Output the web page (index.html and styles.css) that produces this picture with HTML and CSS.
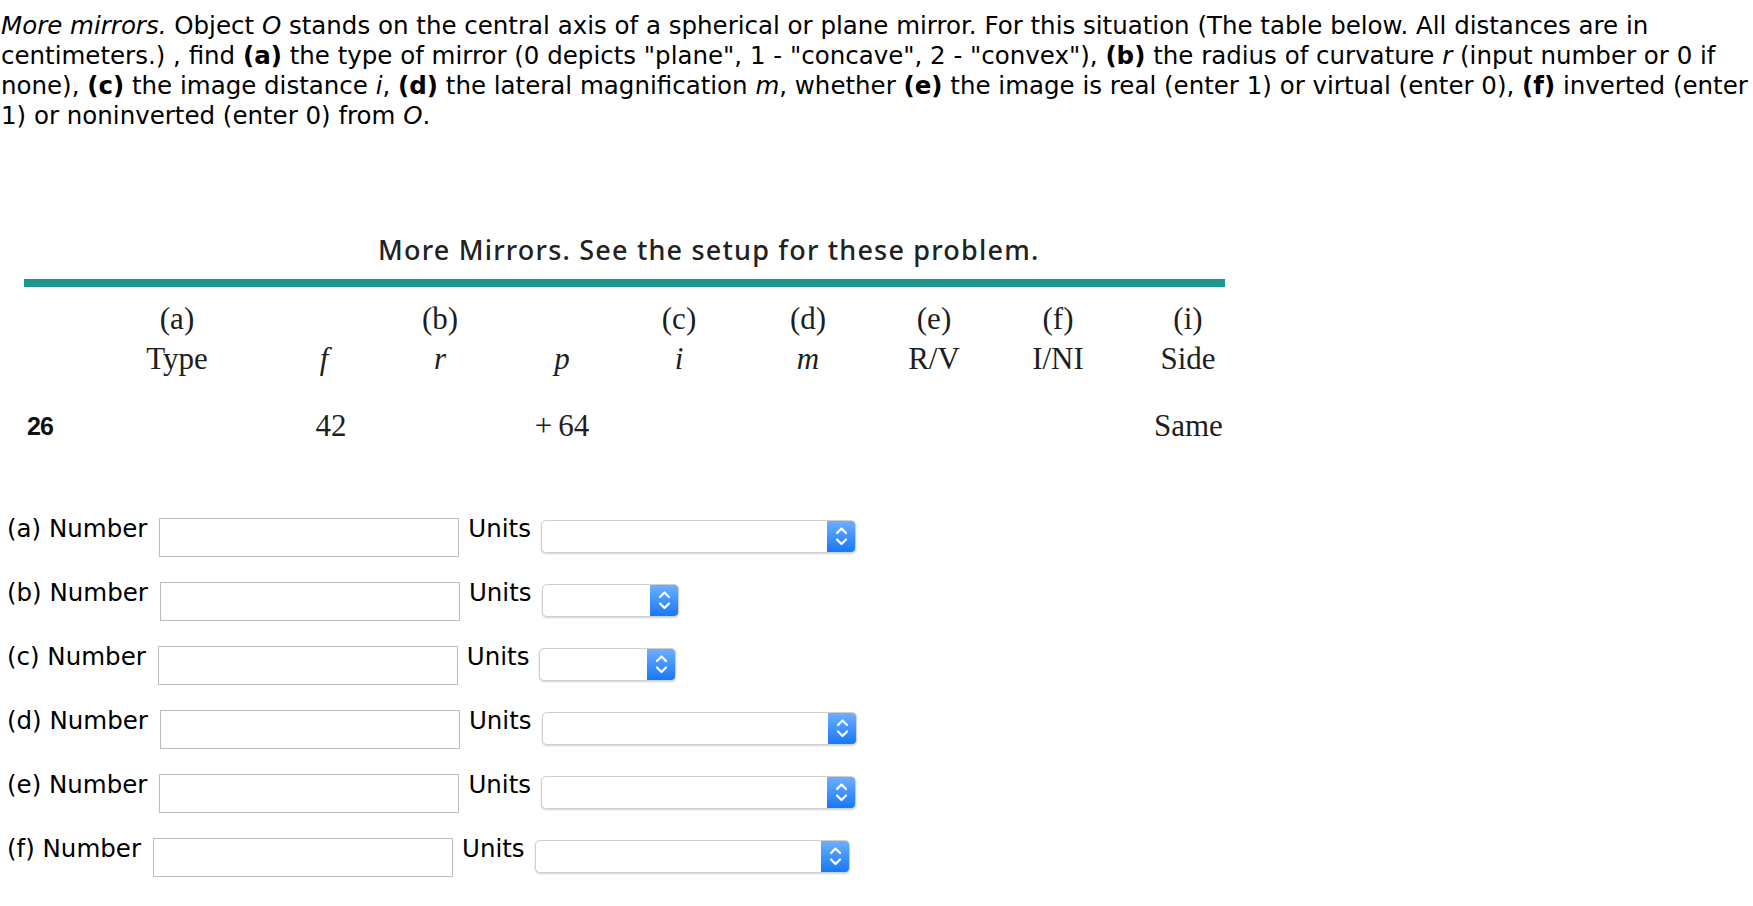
FILE: index.html
```html
<!DOCTYPE html>
<html lang="en">
<head>
    <meta charset="UTF-8">
    <title>More mirrors</title>
    <link rel="stylesheet" href="styles.css">
</head>
<body>
    <p class="prompt"><i>More mirrors.</i> Object <i>O</i> stands on the central axis of a spherical or plane mirror. For this situation (The table below. All distances are in centimeters.) , find <b>(a)</b> the type of mirror (0 depicts "plane", 1 - "concave", 2 - "convex"), <b>(b)</b> the radius of curvature <i>r</i> (input number or 0 if none), <b>(c)</b> the image distance <i>i</i>, <b>(d)</b> the lateral magnification <i>m</i>, whether <b>(e)</b> the image is real (enter 1) or virtual (enter 0), <b>(f)</b> inverted (enter 1) or noninverted (enter 0) from <i>O</i>.</p>

    <!-- tabla del libro -->
    <div class="figure">
        <div class="fig-title">More Mirrors. See the setup for these problem.</div>
        <div class="fig-bar"></div>
        <div class="fig-table">
            <div></div>
            <div>(a)</div>
            <div></div>
            <div>(b)</div>
            <div></div>
            <div>(c)</div>
            <div>(d)</div>
            <div>(e)</div>
            <div>(f)</div>
            <div>(i)</div>

            <div></div>
            <div>Type</div>
            <div><i>f</i></div>
            <div><i>r</i></div>
            <div><i>p</i></div>
            <div><i>i</i></div>
            <div><i>m</i></div>
            <div>R/V</div>
            <div>I/NI</div>
            <div>Side</div>

            <div class="row-num">26</div>
            <div></div>
            <div class="shift">42</div>
            <div></div>
            <div>+&thinsp;64</div>
            <div></div>
            <div></div>
            <div></div>
            <div></div>
            <div>Same</div>
        </div>
    </div>

    <!-- respuestas -->
    <div class="answers">
        <div class="answer">
            <span class="label">(a) Number</span>
            <input type="text" class="num">
            <span class="units">Units</span>
            <div class="select wide"><span class="select-value"></span><span class="select-btn"><svg width="29" height="33" viewBox="0 0 29 33"><path d="M10 13 L14.5 8.5 L19 13 M10 19.5 L14.5 24 L19 19.5"/></svg></span></div>
        </div>
        <div class="answer">
            <span class="label">(b) Number</span>
            <input type="text" class="num">
            <span class="units">Units</span>
            <div class="select"><span class="select-value"></span><span class="select-btn"><svg width="29" height="33" viewBox="0 0 29 33"><path d="M10 13 L14.5 8.5 L19 13 M10 19.5 L14.5 24 L19 19.5"/></svg></span></div>
        </div>
        <div class="answer">
            <span class="label">(c) Number</span>
            <input type="text" class="num">
            <span class="units">Units</span>
            <div class="select"><span class="select-value"></span><span class="select-btn"><svg width="29" height="33" viewBox="0 0 29 33"><path d="M10 13 L14.5 8.5 L19 13 M10 19.5 L14.5 24 L19 19.5"/></svg></span></div>
        </div>
        <div class="answer">
            <span class="label">(d) Number</span>
            <input type="text" class="num">
            <span class="units">Units</span>
            <div class="select wide"><span class="select-value"></span><span class="select-btn"><svg width="29" height="33" viewBox="0 0 29 33"><path d="M10 13 L14.5 8.5 L19 13 M10 19.5 L14.5 24 L19 19.5"/></svg></span></div>
        </div>
        <div class="answer">
            <span class="label">(e) Number</span>
            <input type="text" class="num">
            <span class="units">Units</span>
            <div class="select wide"><span class="select-value"></span><span class="select-btn"><svg width="29" height="33" viewBox="0 0 29 33"><path d="M10 13 L14.5 8.5 L19 13 M10 19.5 L14.5 24 L19 19.5"/></svg></span></div>
        </div>
        <div class="answer">
            <span class="label">(f) Number</span>
            <input type="text" class="num">
            <span class="units">Units</span>
            <div class="select wide"><span class="select-value"></span><span class="select-btn"><svg width="29" height="33" viewBox="0 0 29 33"><path d="M10 13 L14.5 8.5 L19 13 M10 19.5 L14.5 24 L19 19.5"/></svg></span></div>
        </div>
    </div>
</body>
</html>
```

FILE: styles.css
```css
body {
    margin: 0;
    background-color: #fff;
    color: #000;
    font-family: 'DejaVu Sans', Verdana, sans-serif;
    font-size: 24.5px;
}
.prompt {
    margin: 0;
    padding: 11px 0 0 1px;
    line-height: 30px;
}

/* tabla */
.figure {
    margin-top: 99px;
    width: 1230px;
    font-family: 'Liberation Serif', 'Times New Roman', serif;
    color: #1e1e1e;
}
.fig-title {
    font-family: 'Noto Sans', 'Open Sans', sans-serif;
    font-size: 27px;
    font-weight: 500;
    letter-spacing: 1.2px;
    line-height: 40px;
    padding-left: 378px;
    color: #222;
}
.fig-bar {
    margin: 9px 0 0 24px;
    width: 1201px;
    height: 8px;
    background-color: #1f968f; /* verde azulado */
    box-shadow: 0 0 2px #bff4f0;
}
.fig-table {
    display: grid;
    grid-template-columns: 110px 134px 160px 72px 172px 62px 196px 56px 192px 68px;
    grid-template-rows: 40px 41px 66px;
    margin-top: 12px;
    font-size: 31px;
    text-align: center;
}
.fig-table > div {
    line-height: 40px;
}
.fig-table > div:nth-child(n+21) {
    padding-top: 26px;
}
.fig-table .shift {
    padding-left: 14px;
}
.row-num {
    text-align: left;
    padding-left: 27px;
    font-family: 'Liberation Sans', Arial, sans-serif;
    font-weight: bold;
    font-size: 25px;
    letter-spacing: -1px;
    color: #111;
}

/* formulario */
.answers {
    margin-top: 67px;
}
.answer {
    display: flex;
    align-items: flex-start;
    margin-bottom: 20px;
    padding-left: 7px;
}
.label {
    margin-top: 2px;
    line-height: 28px;
    margin-right: 12px;
}
.num {
    margin: 5px 0 0 0;
    width: 300px;
    height: 39px;
    box-sizing: border-box;
    border: 1px solid #bdbdbd;
    border-radius: 0;
    padding: 0;
}
.units {
    margin-top: 2px;
    line-height: 28px;
    margin-left: 9px;
    margin-right: 10px;
}
.select {
    display: flex;
    margin-top: 7px;
    width: 137px;
    height: 33px;
    box-sizing: border-box;
    border: 1px solid #cfcfcf;
    border-radius: 5px;
    box-shadow: 0 1px 2px rgba(0,0,0,0.18);
    overflow: hidden;
    background-color: #fff;
}
.select.wide {
    width: 315px;
}
.select-value {
    flex: 1;
}
.select-btn {
    width: 29px;
    margin: -1px -1px -1px 0;
    background: linear-gradient(#6eb2fd, #1576f6);
}
.select-btn svg {
    display: block;
}
.select-btn path {
    fill: none;
    stroke: #fff;
    stroke-width: 2.2;
    stroke-linecap: round;
    stroke-linejoin: round;
}
```
